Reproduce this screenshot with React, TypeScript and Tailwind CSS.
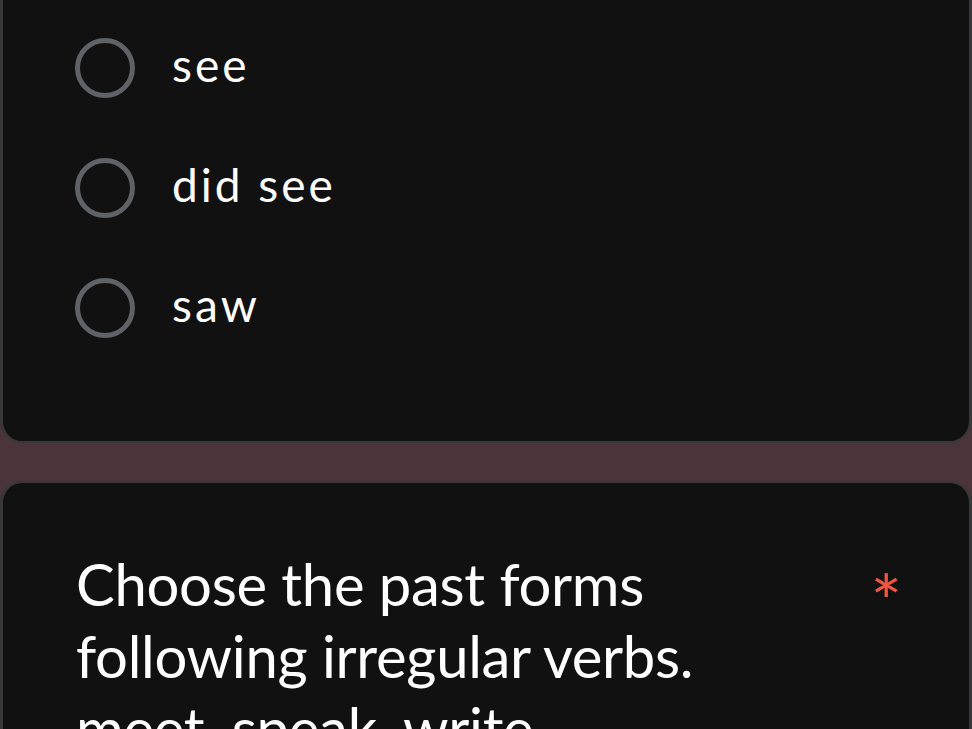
const OPTIONS = ["see", "did see", "saw"];

function Radio() {
  return <div className="h-[60px] w-[60px] shrink-0 rounded-full border-[5px] border-[#5f6368]" />;
}

export default function App() {
  return (
    <div className="h-[729px] w-[972px] overflow-hidden bg-[#4b353b] font-['Lato',sans-serif] text-white">
      <div className="rounded-b-[22px] border-x-[3px] border-b-[2px] border-[#38383a] bg-[#111111] pb-[73px] pt-[8px]">
        {OPTIONS.map(o => (
          <div key={o} className="flex h-[120px] items-center gap-[37px] pl-[72px]">
            <Radio />
            <span className="pb-[6px] text-[46px] leading-none tracking-[3px]">{o}</span>
          </div>
        ))}
      </div>
      <div className="mt-[38px] rounded-t-[22px] border-x-[3px] border-t-[2px] border-[#38383a] bg-[#111111] pt-[65px]">
        <div className="flex items-start pl-[73px] pr-[67px]">
          <p className="w-[680px] text-[58px] leading-[72px] tracking-[-0.3px]">
            Choose the past forms following irregular verbs. meet, speak, write
          </p>
          <span className="ml-auto pt-[16px] text-[74px] leading-none text-[#f25542]">*</span>
        </div>
      </div>
    </div>
  );
}
